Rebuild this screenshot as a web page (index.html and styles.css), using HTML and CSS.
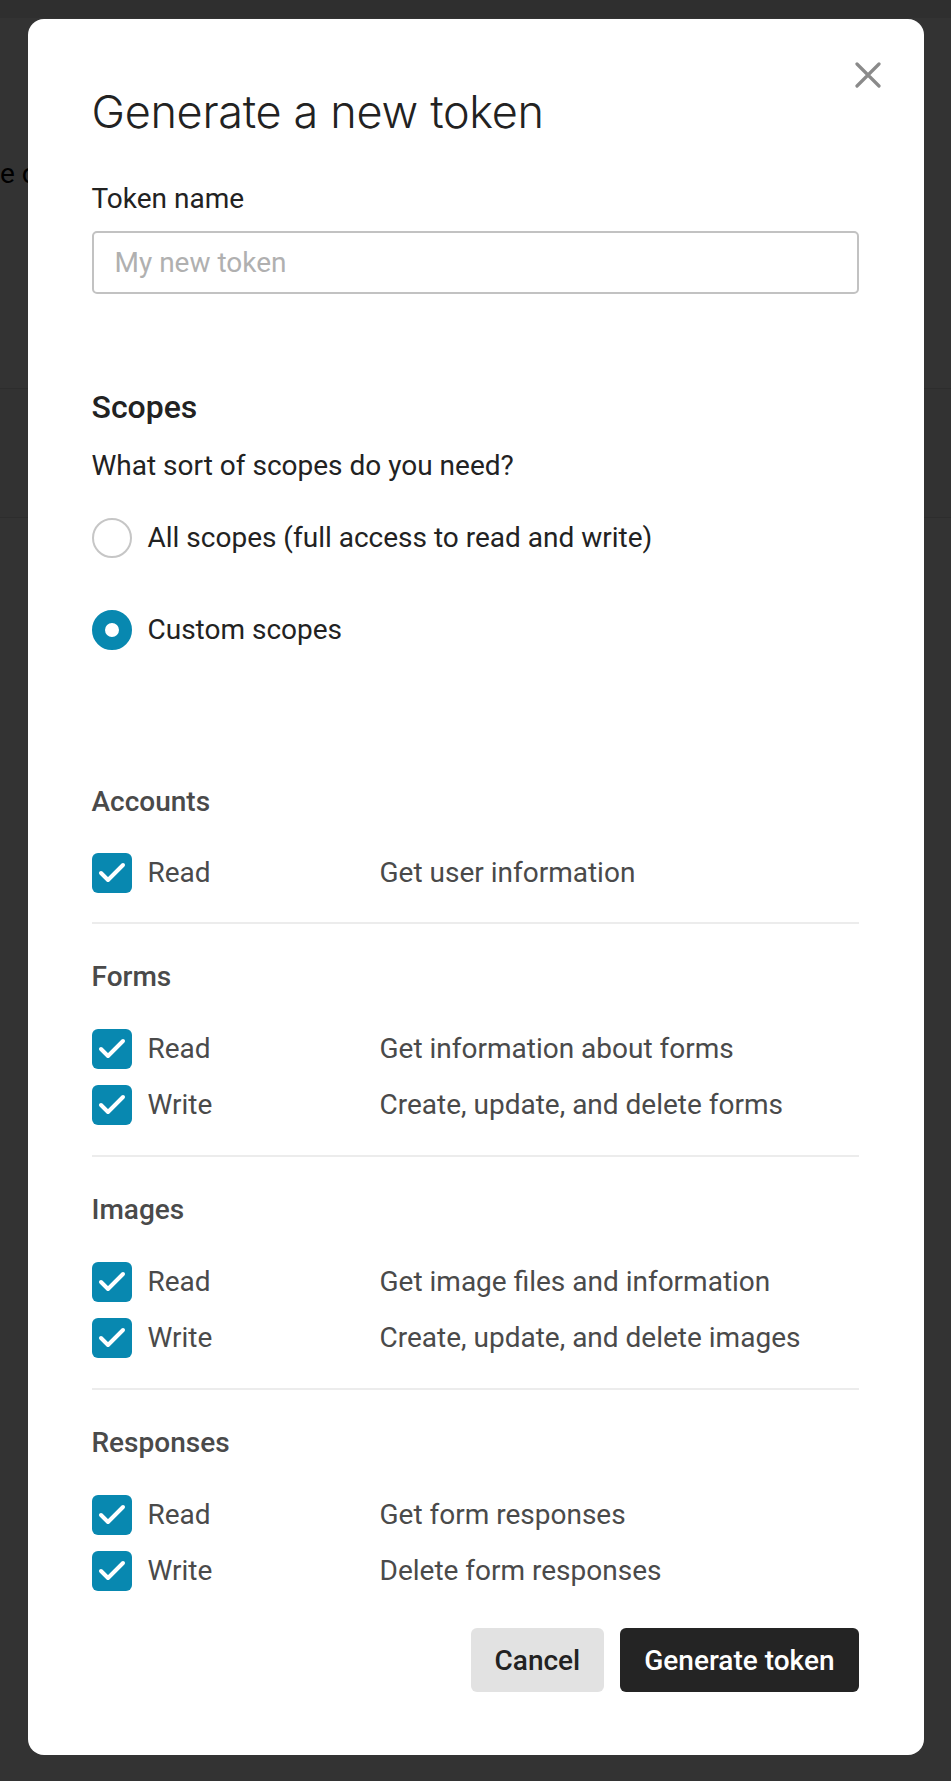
FILE: index.html
```html
<!DOCTYPE html>
<html lang="en">
<head>
<meta charset="utf-8">
<title>Generate a new token</title>
<link rel="stylesheet" href="styles.css">
</head>
<body>
<div class="page">
  <div class="page-header"></div>
  <p class="page-text">e o</p>
  <div class="page-section"></div>
</div>
<div class="overlay">
  <div class="modal" role="dialog" aria-labelledby="modal-title">
    <button class="close" aria-label="Close">
      <svg viewBox="0 0 26 26" width="26" height="26"><path d="M2 2 L24 24 M24 2 L2 24" stroke="#8a8a8a" stroke-width="3.2" stroke-linecap="round" fill="none"/></svg>
    </button>
    <h1 class="title" id="modal-title">Generate a new token</h1>

    <label class="field-label" for="token-name">Token name</label>
    <input class="text-input" id="token-name" type="text" placeholder="My new token">

    <h2 class="scopes-title">Scopes</h2>
    <p class="question">What sort of scopes do you need?</p>
    <div class="radios">
      <div class="radio-row"><span class="radio"></span><span class="radio-label">All scopes (full access to read and write)</span></div>
      <div class="radio-row"><span class="radio radio-on"></span><span class="radio-label">Custom scopes</span></div>
    </div>

    <div class="groups">
      <section class="group">
        <h3 class="group-title">Accounts</h3>
        <div class="rows">
          <div class="row"><div class="perm"><span class="check"><svg viewBox="0 0 40 40"><path d="M9 20 L16 27 L31 12"/></svg></span><span>Read</span></div><span class="desc">Get user information</span></div>
        </div>
      </section>
      <section class="group">
        <h3 class="group-title">Forms</h3>
        <div class="rows">
          <div class="row"><div class="perm"><span class="check"><svg viewBox="0 0 40 40"><path d="M9 20 L16 27 L31 12"/></svg></span><span>Read</span></div><span class="desc">Get information about forms</span></div>
          <div class="row"><div class="perm"><span class="check"><svg viewBox="0 0 40 40"><path d="M9 20 L16 27 L31 12"/></svg></span><span>Write</span></div><span class="desc">Create, update, and delete forms</span></div>
        </div>
      </section>
      <section class="group">
        <h3 class="group-title">Images</h3>
        <div class="rows">
          <div class="row"><div class="perm"><span class="check"><svg viewBox="0 0 40 40"><path d="M9 20 L16 27 L31 12"/></svg></span><span>Read</span></div><span class="desc">Get image files and information</span></div>
          <div class="row"><div class="perm"><span class="check"><svg viewBox="0 0 40 40"><path d="M9 20 L16 27 L31 12"/></svg></span><span>Write</span></div><span class="desc">Create, update, and delete images</span></div>
        </div>
      </section>
      <section class="group">
        <h3 class="group-title">Responses</h3>
        <div class="rows">
          <div class="row"><div class="perm"><span class="check"><svg viewBox="0 0 40 40"><path d="M9 20 L16 27 L31 12"/></svg></span><span>Read</span></div><span class="desc">Get form responses</span></div>
          <div class="row"><div class="perm"><span class="check"><svg viewBox="0 0 40 40"><path d="M9 20 L16 27 L31 12"/></svg></span><span>Write</span></div><span class="desc">Delete form responses</span></div>
        </div>
      </section>
    </div>

    <div class="actions">
      <button class="btn btn-cancel">Cancel</button>
      <button class="btn btn-primary">Generate token</button>
    </div>
  </div>
</div>
</body>
</html>
```

FILE: styles.css
```css
* { box-sizing: border-box; }
html, body { margin: 0; padding: 0; }
body {
  font-family: Roboto, "Liberation Sans", Arial, sans-serif;
  background: #fff;
  width: 951px;
  height: 1781px;
  overflow: hidden;
}

/* page behind the overlay */
.page { height: 1781px; background: #fff; }
.page-header { height: 18px; background: #e8e8e8; }
.page-text {
  margin: 140px 0 0 0;
  font-size: 28px;
  line-height: 32px;
  color: #000;
  white-space: nowrap;
}
.page-section {
  margin-top: 198px;
  height: 130px;
  border-top: 1px solid #e2e2e2;
  border-bottom: 1px solid #e2e2e2;
  background: #fbfbfb;
}

.overlay {
  position: fixed;
  inset: 0;
  background: rgba(0, 0, 0, 0.8);
  display: flex;
  justify-content: center;
  align-items: flex-start;
  padding-top: 19px;
}

.modal {
  position: relative;
  width: 896px;
  background: #fff;
  border-radius: 16px;
  padding: 67px 65px 63px 64px;
  color: #222;
}

.close {
  position: absolute;
  top: 43px;
  right: 43px;
  width: 26px;
  height: 26px;
  padding: 0;
  border: 0;
  background: none;
  display: block;
}
.close svg { display: block; }

.title {
  margin: 0;
  font-family: Inter, "Noto Sans", sans-serif;
  font-weight: 300;
  font-size: 45px;
  line-height: 52px;
  color: #222;
  letter-spacing: -0.3px;
}

.field-label {
  display: block;
  margin-top: 45px;
  font-size: 28px;
  line-height: 32px;
  color: #222;
}

.text-input {
  display: block;
  width: 100%;
  height: 63px;
  margin-top: 16px;
  border: 2px solid #c2c2c2;
  border-radius: 5px;
  padding: 0 21px;
  font-family: Roboto, sans-serif;
  font-size: 28px;
  color: #222;
  outline: none;
}
.text-input::placeholder { color: #b0b0b0; }

.scopes-title {
  margin: 97px 0 0;
  font-size: 32px;
  line-height: 32px;
  font-weight: 500;
  color: #222;
}

.question {
  margin: 27px 0 0;
  font-size: 28px;
  line-height: 32px;
  color: #222;
}

.radios {
  margin-top: 36px;
  display: flex;
  flex-direction: column;
  gap: 52px;
}
.radio-row {
  display: flex;
  align-items: center;
  gap: 16px;
  font-size: 28px;
  line-height: 32px;
  color: #222;
}
.radio {
  width: 40px;
  height: 40px;
  border-radius: 50%;
  border: 2px solid #c6c6c6;
  background: #fff;
  flex: none;
}
.radio-on {
  border: 13px solid #0888b0;
}

.groups { margin-top: 136px; }
.group { padding: 0 0 30px; }
.group:first-child { padding-bottom: 29px; }
.group:first-child .rows { margin-top: 35px; }
.group + .group {
  border-top: 2px solid #ececec;
  padding-top: 37px;
}
.group:last-child { padding-bottom: 0; }

.group-title {
  margin: 0;
  font-size: 28px;
  line-height: 32px;
  font-weight: 500;
  color: #4a4a4a;
}

.rows {
  margin-top: 36px;
  display: flex;
  flex-direction: column;
  gap: 16px;
}
.row {
  display: grid;
  grid-template-columns: 272px 1fr;
  column-gap: 16px;
  align-items: center;
  font-size: 28px;
  line-height: 32px;
  color: #4a4a4a;
}
.perm {
  display: flex;
  align-items: center;
  gap: 16px;
}
.check {
  width: 40px;
  height: 40px;
  border-radius: 6px;
  background: #0888b0;
  flex: none;
  display: block;
}
.check svg {
  display: block;
  width: 40px;
  height: 40px;
}
.check path {
  fill: none;
  stroke: #fff;
  stroke-width: 4;
  stroke-linecap: round;
  stroke-linejoin: round;
}

.actions {
  margin-top: 37px;
  display: flex;
  justify-content: flex-end;
  gap: 16px;
}
.btn {
  height: 64px;
  border: 0;
  border-radius: 6px;
  font-family: Roboto, sans-serif;
  font-size: 28px;
  font-weight: 500;
  padding: 0 24px;
}
.btn-cancel { background: #e2e2e2; color: #222; }
.btn-primary { background: #242424; color: #fff; }
```
